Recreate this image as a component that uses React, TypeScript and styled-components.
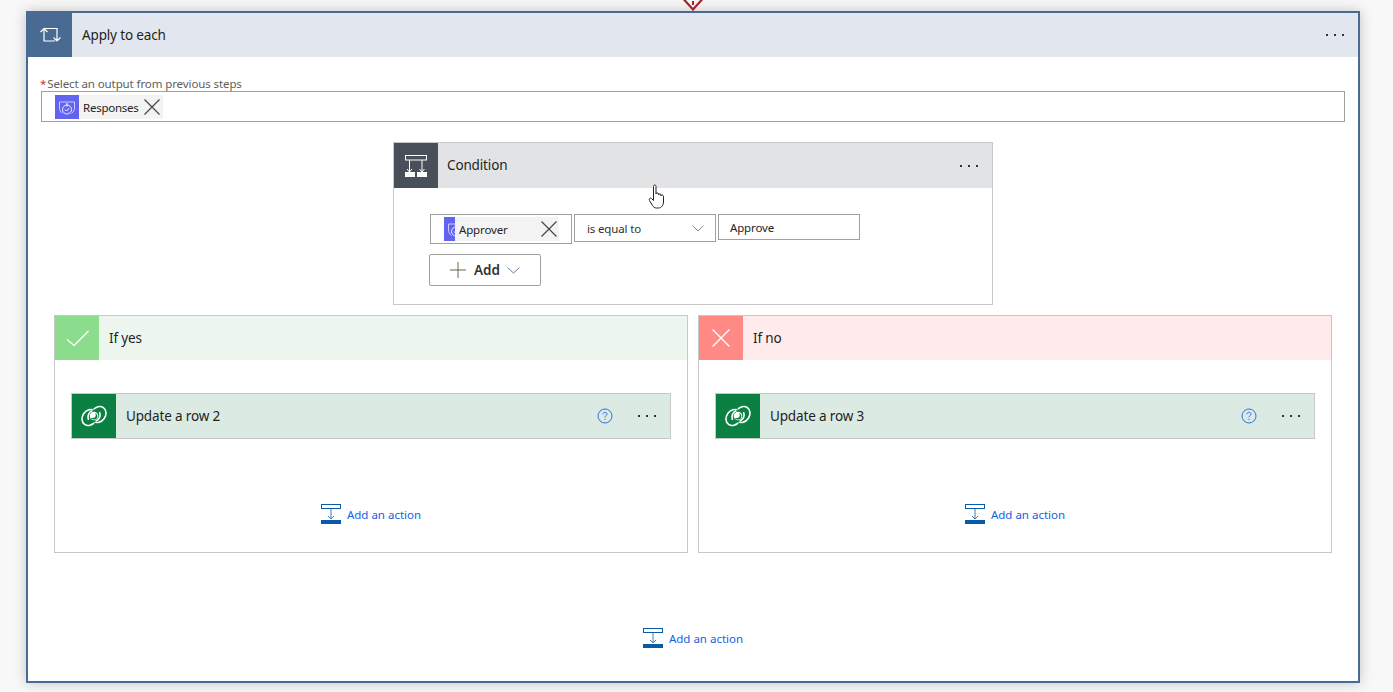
import * as React from "react";
import styled, { createGlobalStyle } from "styled-components";

const GlobalStyle = createGlobalStyle`
    html, body {
        margin: 0;
        padding: 0;
        background: #f8f8f8;
    }
    body {
        font-family: "Noto Sans", "Open Sans", "Liberation Sans", sans-serif;
        color: #252423;
    }
`;

const Page = styled.div`
    position: relative;
    width: 1393px;
    height: 692px;
    overflow: hidden;
    background: #f8f8f8;
`;

const TopConnector = styled.div`
    display: flex;
    justify-content: center;
    height: 11px;
    padding-right: 7px;
`;

const LoopCard = styled.div`
    box-sizing: border-box;
    width: 1334px;
    height: 672px;
    margin-left: 26px;
    border: 2px solid #496a93;
    background: #fff;
    box-shadow: 0 0 12px rgba(0, 0, 0, 0.22);
`;

const CardHeader = styled.div<{ $bg: string; $h?: number }>`
    display: flex;
    align-items: center;
    height: ${(p) => p.$h ?? 44}px;
    background: ${(p) => p.$bg};
    flex: none;
`;

const IconTile = styled.div<{ $bg: string; $h?: number }>`
    display: flex;
    align-items: center;
    justify-content: center;
    flex: none;
    width: 44px;
    height: ${(p) => p.$h ?? 44}px;
    background: ${(p) => p.$bg};
`;

const CardTitle = styled.div`
    flex: 1;
    margin-left: 10px;
    font-size: 13.5px;
    letter-spacing: -0.15px;
    color: #1f1f1f;
`;

const ConditionTitle = styled(CardTitle)`
    margin-left: 9px;
    margin-top: -2px;
`;

const Dots = styled.div<{ $right: number }>`
    display: flex;
    gap: 6px;
    margin-right: ${(p) => p.$right}px;
    span {
        width: 2px;
        height: 2px;
        background: #333;
    }
`;

const MoreDots = ({ right }: { right: number }) => (
    <Dots $right={right}>
        <span />
        <span />
        <span />
    </Dots>
);

const FieldLabel = styled.div`
    margin: 20px 0 0 12px;
    height: 14px;
    font-size: 11.5px;
    line-height: 13px;
    letter-spacing: -0.1px;
    color: #605e5c;
    b {
        margin-right: 1px;
        color: #d13438;
        font-weight: 400;
    }
`;

const TokenText = styled.span`
    flex: 1;
    margin-left: 4px;
`;

const OutputField = styled.div`
    box-sizing: border-box;
    display: flex;
    align-items: center;
    height: 31px;
    margin: 0 13px;
    padding-left: 13px;
    border: 1px solid #a0a0a0;
    ${TokenText} {
        margin-top: 2px;
        letter-spacing: -0.25px;
    }
`;

const Token = styled.div<{ $w: number; $iconW: number }>`
    display: flex;
    align-items: center;
    width: ${(p) => p.$w}px;
    height: 24px;
    background: #f3f3f3;
    font-size: 11.5px;
    letter-spacing: -0.15px;
    color: #252423;
    & > svg:first-child {
        flex: none;
        width: ${(p) => p.$iconW}px;
        height: 24px;
        background: #6264f0;
    }
`;

const ConditionCard = styled.div`
    box-sizing: border-box;
    width: 600px;
    height: 163px;
    margin: 20px auto 0;
    border: 1px solid #c8c8c8;
    background: #fff;
`;

const ConditionRow = styled.div`
    display: flex;
    align-items: flex-start;
    gap: 2px;
    margin: 26px 0 0 36px;
`;

const ConditionCell = styled.div<{ $w: number; $h: number }>`
    box-sizing: border-box;
    display: flex;
    align-items: center;
    width: ${(p) => p.$w}px;
    height: ${(p) => p.$h}px;
    border: 1px solid #a0a0a0;
    font-size: 11.5px;
    letter-spacing: -0.15px;
    color: #323130;
`;

const TokenCell = styled(ConditionCell)`
    padding-left: 13px;
`;

const SelectCell = styled(ConditionCell)`
    justify-content: space-between;
    padding: 0 11px 0 12px;
`;

const InputCell = styled(ConditionCell)`
    padding: 0 0 0 11px;
    color: #252423;
`;

const AddButton = styled.div`
    box-sizing: border-box;
    display: flex;
    align-items: center;
    width: 112px;
    height: 32px;
    margin: 10px 0 0 35px;
    padding-left: 20px;
    border: 1px solid #a0a0a0;
    border-radius: 2px;
    font-size: 13.5px;
    font-weight: 600;
    color: #323130;
    span {
        margin: 0 7px 0 8px;
    }
`;

const Branches = styled.div`
    display: flex;
    gap: 10px;
    margin: 10px 26px 0;
`;

const Branch = styled.div`
    box-sizing: border-box;
    flex: 1;
    display: flex;
    flex-direction: column;
    height: 238px;
    border: 1px solid #c8c8c8;
`;

const ActionCard = styled.div`
    box-sizing: border-box;
    display: flex;
    align-items: center;
    height: 46px;
    margin: 33px 16px 0;
    border: 1px solid #c8c8c8;
    background: #dbeae3;
`;

const HelpIcon = styled.svg`
    flex: none;
    margin-right: 25px;
`;

const AddAction = styled.div<{ $top: number }>`
    display: flex;
    align-items: center;
    justify-content: center;
    gap: 6px;
    margin-top: ${(p) => p.$top}px;
    font-size: 11.5px;
    color: #0f62e6;
`;

const Cursor = styled.svg`
    position: absolute;
    left: 648px;
    top: 184px;
`;

const CloseX = ({ size, color = "#444" }: { size: number; color?: string }) => (
    <svg width={size} height={size} viewBox="0 0 16 16" fill="none" style={{ flex: "none" }}>
        <path d="M.5.5l15 15M15.5.5l-15 15" stroke={color} strokeWidth="1.2" />
    </svg>
);

const ApprovalIcon = ({ w }: { w: number }) => (
    <svg viewBox={`0 0 ${w} 24`} fill="none">
        <path d="M7.500 18.500C5.500 17 4.500 15 4.500 13V7h15v6c0 2-1 4-3 5.500" stroke="#c9caff" strokeWidth="1" />
        <circle cx="12" cy="14.500" r="4.500" stroke="#eeeeff" strokeWidth="1" />
        <path d="M10 14.500l1.500 1.500 2.500-2.800M12 8v3.500" stroke="#fff" strokeWidth="1" />
    </svg>
);

// two overlapping lobes, the inner arcs hidden behind a green disc, white swirl in the middle
const DataverseLogo = () => (
    <svg width="28" height="28" viewBox="0 0 28 28" fill="none">
        <ellipse cx="9.500" cy="15.500" rx="7" ry="8.500" transform="rotate(35 9.500 15.500)" stroke="#fff" strokeWidth="1.600" />
        <ellipse cx="18.500" cy="12.500" rx="7" ry="8.500" transform="rotate(35 18.500 12.500)" stroke="#fff" strokeWidth="1.600" />
        <circle cx="14" cy="14" r="6.500" fill="#0b8043" />
        <path d="M8.500 18c-1.500-3.500 0-8 4-9.500M19.500 10c1.500 3.500 0 8-4 9.500" stroke="#fff" strokeWidth="1.600" />
        <circle cx="14" cy="14" r="4.300" fill="#fff" />
        <path d="M10.500 15.500c1.500 1 4 .8 5-1 .6-1.200.3-2.500-.6-3.500 2.300.8 3.200 3.200 2 5.200-1.300 2-4.900 1.800-6.400-.7z" fill="#0b8043" />
    </svg>
);

const AddActionIcon = () => (
    <svg width="20" height="20" viewBox="0 0 20 20" fill="none">
        <rect x=".5" y=".5" width="19" height="4" stroke="#0b5aa6" fill="#fff" />
        <path d="M10 5v10M7 12l3 3 3-3" stroke="#3f7db8" strokeWidth="1" />
        <rect y="16" width="20" height="4" fill="#0b5aa6" />
    </svg>
);

const UpdateRow = ({ title }: { title: string }) => (
    <ActionCard>
        <IconTile $bg="#0b8043">
            <DataverseLogo />
        </IconTile>
        <CardTitle>{title}</CardTitle>
        <HelpIcon width="16" height="16" viewBox="0 0 16 16" fill="none">
            <circle cx="8" cy="8" r="7" stroke="#2f6fe8" strokeWidth="1" />
            <path
                d="M6 6.200c0-1.200.9-1.900 2-1.900s2 .7 2 1.800c0 1.500-2 1.500-2 3.100M8 10.800v1.200"
                stroke="#2f6fe8"
                strokeWidth="1"
            />
        </HelpIcon>
        <MoreDots right={14} />
    </ActionCard>
);

const AddActionLink = ({ top }: { top: number }) => (
    <AddAction $top={top}>
        <AddActionIcon />
        <span>Add an action</span>
    </AddAction>
);

export default function App() {
    return (
        <Page>
            <GlobalStyle />
            <TopConnector>
                <svg width="22" height="11" viewBox="0 0 22 11" fill="none">
                    <path d="M1.500-1L11 9.500 20.500-1" stroke="#a4262c" strokeWidth="2.200" />
                    <path d="M11 1v4" stroke="#a4262c" strokeWidth="2" />
                </svg>
            </TopConnector>
            <LoopCard>
                <CardHeader $bg="#e2e7ef">
                    <IconTile $bg="#496a93">
                        <svg width="22" height="16" viewBox="0 0 22 16" fill="none">
                            <path
                                d="M5 3V14H16M1.500 5L5 1.500 8.500 5M5 1.500H18V14M14.500 10.500l3.500 3.500 3.500-3.500"
                                stroke="#fff"
                                strokeWidth="1.200"
                            />
                        </svg>
                    </IconTile>
                    <CardTitle>Apply to each</CardTitle>
                    <MoreDots right={14} />
                </CardHeader>
                <FieldLabel>
                    <b>*</b>Select an output from previous steps
                </FieldLabel>
                <OutputField>
                    <Token $w={108} $iconW={24}>
                        <ApprovalIcon w={24} />
                        <TokenText>Responses</TokenText>
                        <span style={{ display: "flex", marginRight: 3 }}>
                            <CloseX size={16} />
                        </span>
                    </Token>
                </OutputField>
                <ConditionCard>
                    <CardHeader $bg="#e2e3e5" $h={45}>
                        <IconTile $bg="#484f58" $h={45}>
                            <svg width="22" height="22" viewBox="0 0 22 22" fill="none">
                                <rect x=".5" y=".5" width="21" height="4.500" stroke="#fff" />
                                <path d="M4.500 5v12M17 5v12M2 14l2.500 3L7 14M14.500 14l2.500 3 2.500-3" stroke="#fff" />
                                <rect y="17" width="10" height="5" fill="#fff" />
                                <rect x="12" y="17" width="10" height="5" fill="#fff" />
                            </svg>
                        </IconTile>
                        <ConditionTitle>Condition</ConditionTitle>
                        <MoreDots right={14} />
                    </CardHeader>
                    <ConditionRow>
                        <TokenCell $w={142} $h={30}>
                            <Token $w={115} $iconW={11}>
                                <ApprovalIcon w={11} />
                                <TokenText>Approver</TokenText>
                                <span style={{ display: "flex", marginRight: 2 }}>
                                    <CloseX size={16} />
                                </span>
                            </Token>
                        </TokenCell>
                        <SelectCell $w={142} $h={28}>
                            <span>is equal to</span>
                            <svg width="12" height="7" viewBox="0 0 12 7" fill="none">
                                <path d="M.5.5L6 6 11.500.5" stroke="#8a8886" />
                            </svg>
                        </SelectCell>
                        <InputCell $w={142} $h={26}>
                            Approve
                        </InputCell>
                    </ConditionRow>
                    <AddButton>
                        <svg width="16" height="16" viewBox="0 0 16 16" fill="none">
                            <path d="M0 8h16" stroke="#605e5c" />
                            <path d="M8 0v16" stroke="#4f7a3a" />
                        </svg>
                        <span>Add</span>
                        <svg width="13" height="7" viewBox="0 0 13 7" fill="none">
                            <path d="M.5.5L6.500 6 12.500.5" stroke="#5b7fa6" />
                        </svg>
                    </AddButton>
                </ConditionCard>
                <Branches>
                    <Branch>
                        <CardHeader $bg="#ecf6ee">
                            <IconTile $bg="#8cdc8d">
                                <svg width="24" height="16" viewBox="0 0 24 16" fill="none">
                                    <path d="M2 9.500L9 15.500 23.500 1" stroke="#fff" strokeWidth="1.300" />
                                </svg>
                            </IconTile>
                            <CardTitle>If yes</CardTitle>
                        </CardHeader>
                        <UpdateRow title="Update a row 2" />
                        <AddActionLink top={65} />
                    </Branch>
                    <Branch>
                        <CardHeader $bg="#ffebeb">
                            <IconTile $bg="#ff8a85">
                                <CloseX size={18} color="#fff" />
                            </IconTile>
                            <CardTitle>If no</CardTitle>
                        </CardHeader>
                        <UpdateRow title="Update a row 3" />
                        <AddActionLink top={65} />
                    </Branch>
                </Branches>
                <AddActionLink top={75} />
            </LoopCard>
            <Cursor width="19" height="26" viewBox="0 0 18 26" fill="#fff" stroke="#222" strokeWidth="1">
                <path d="M5 2.500c0-2 2.500-2 2.500 0V10c0-1.500 2.500-1.500 2.500 0v1c0-1.500 2.500-1.500 2.500 0v1c0-1.500 2.500-1.500 2.500.5v5.500c0 3-2 6-5 6H8c-2 0-3-1-4-2.500l-3-5c-1-2 1-3 2-2l2 2z" />
            </Cursor>
        </Page>
    );
}
